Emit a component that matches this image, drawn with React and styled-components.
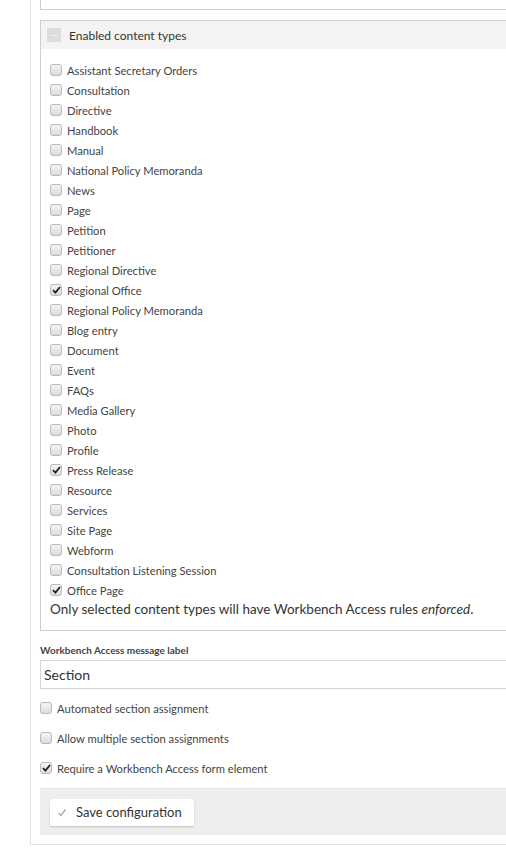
import React from 'react';
import styled, { createGlobalStyle } from 'styled-components';

const GlobalStyle = createGlobalStyle`
  html, body {
    margin: 0;
    padding: 0;
    background: #fff;
    overflow: hidden;
  }
  body {
    font-family: Lato, "Open Sans", "DejaVu Sans", sans-serif;
    color: #333;
  }
`;

const Page = styled.div`
  margin-left: 30px;
  width: 560px;
  border-left: 1px solid #e2e2e2;
  border-bottom: 1px solid #e2e2e2;
  padding: 0 0 9px 9px;
`;

const TopBox = styled.div`
  height: 9px;
  border: 1px solid #cfcfcf;
  border-top: none;
  margin-bottom: 10px;
`;

const Fieldset = styled.div`
  border: 1px solid #cfcfcf;
`;

const Legend = styled.div`
  height: 28px;
  background: #f3f3f3;
  display: flex;
  align-items: center;
  padding-left: 6px;
  gap: 8px;
  font-size: 12px;
  color: #333;
`;

const Toggle = styled.span`
  width: 14px;
  height: 14px;
  background: #dcdcdc;
  display: flex;
  align-items: center;
  justify-content: center;
  &::after {
    content: '';
    width: 8px;
    height: 1px;
    background: #eee;
  }
`;

const Body = styled.div`
  padding: 11px 9px 13px 9px;
`;

const Row = styled.label`
  display: flex;
  align-items: center;
  height: ${(p) => p.h || 20}px;
  gap: 5px;
  font-size: 11.2px;
  color: #444;
`;

const Box = styled.span`
  width: 12px;
  height: 12px;
  flex: none;
  box-sizing: border-box;
  border: 1px solid #b9b9b9;
  border-radius: 3px;
  background: linear-gradient(#f6f6f6, #dcdcdc);
  display: flex;
  align-items: center;
  justify-content: center;
`;

const Description = styled.div`
  font-size: 13.5px;
  color: #333;
  margin-top: 1px;
  em {
    font-style: italic;
  }
`;

const FieldLabel = styled.div`
  font-size: 10px;
  font-weight: 700;
  color: #444;
  margin-top: 13px;
  height: 16px;
`;

const TextInput = styled.div`
  height: 27px;
  border: 1px solid #d4d4d4;
  display: flex;
  align-items: center;
  padding-left: 3px;
  font-size: 14px;
  color: #333;
`;

const Options = styled.div`
  display: flex;
  flex-direction: column;
  margin-top: 4px;
`;

const Actions = styled.div`
  margin-top: 5px;
  background: #eee;
  border-top: 1px solid #e4e4e4;
  height: 46px;
  display: flex;
  align-items: center;
  padding-left: 10px;
`;

const Button = styled.div`
  height: 27px;
  width: 144px;
  box-sizing: border-box;
  background: #fff;
  border-radius: 2px;
  box-shadow: 0 1px 2px rgba(0, 0, 0, 0.18);
  display: flex;
  align-items: center;
  font-size: 13px;
  color: #333;
  gap: 9px;
  padding-left: 7px;
`;

const Check = ({ on }) => (
  <Box>
    {on && (
      <svg width="9" height="8" viewBox="0 0 9 8">
        <path d="M1 4.2 L3.4 6.6 L8 1" fill="none" stroke="#222" strokeWidth="1.8" />
      </svg>
    )}
  </Box>
);

const types = [
  ['Assistant Secretary Orders'],
  ['Consultation'],
  ['Directive'],
  ['Handbook'],
  ['Manual'],
  ['National Policy Memoranda'],
  ['News'],
  ['Page'],
  ['Petition'],
  ['Petitioner'],
  ['Regional Directive'],
  ['Regional Office', true],
  ['Regional Policy Memoranda'],
  ['Blog entry'],
  ['Document'],
  ['Event'],
  ['FAQs'],
  ['Media Gallery'],
  ['Photo'],
  ['Profile'],
  ['Press Release', true],
  ['Resource'],
  ['Services'],
  ['Site Page'],
  ['Webform'],
  ['Consultation Listening Session'],
  ['Office Page', true],
];

export default function App() {
  return (
    <>
      <GlobalStyle />
      <Page>
        <TopBox />
        <Fieldset>
          <Legend>
            <Toggle />
            Enabled content types
          </Legend>
          <Body>
            {types.map(([name, on]) => (
              <Row key={name}>
                <Check on={on} />
                {name}
              </Row>
            ))}
            <Description>
              Only selected content types will have Workbench Access rules <em>enforced</em>.
            </Description>
          </Body>
        </Fieldset>
        <FieldLabel>Workbench Access message label</FieldLabel>
        <TextInput>Section</TextInput>
        <Options>
          <Row h={30}>
            <Check />
            Automated section assignment
          </Row>
          <Row h={30}>
            <Check />
            Allow multiple section assignments
          </Row>
          <Row h={30}>
            <Check on />
            Require a Workbench Access form element
          </Row>
        </Options>
        <Actions>
          <Button>
            <svg width="10" height="9" viewBox="0 0 10 9">
              <path d="M1.5 5 L4 7.5 L8.5 1.5" fill="none" stroke="#aaa" strokeWidth="1.3" />
            </svg>
            Save configuration
          </Button>
        </Actions>
      </Page>
    </>
  );
}
